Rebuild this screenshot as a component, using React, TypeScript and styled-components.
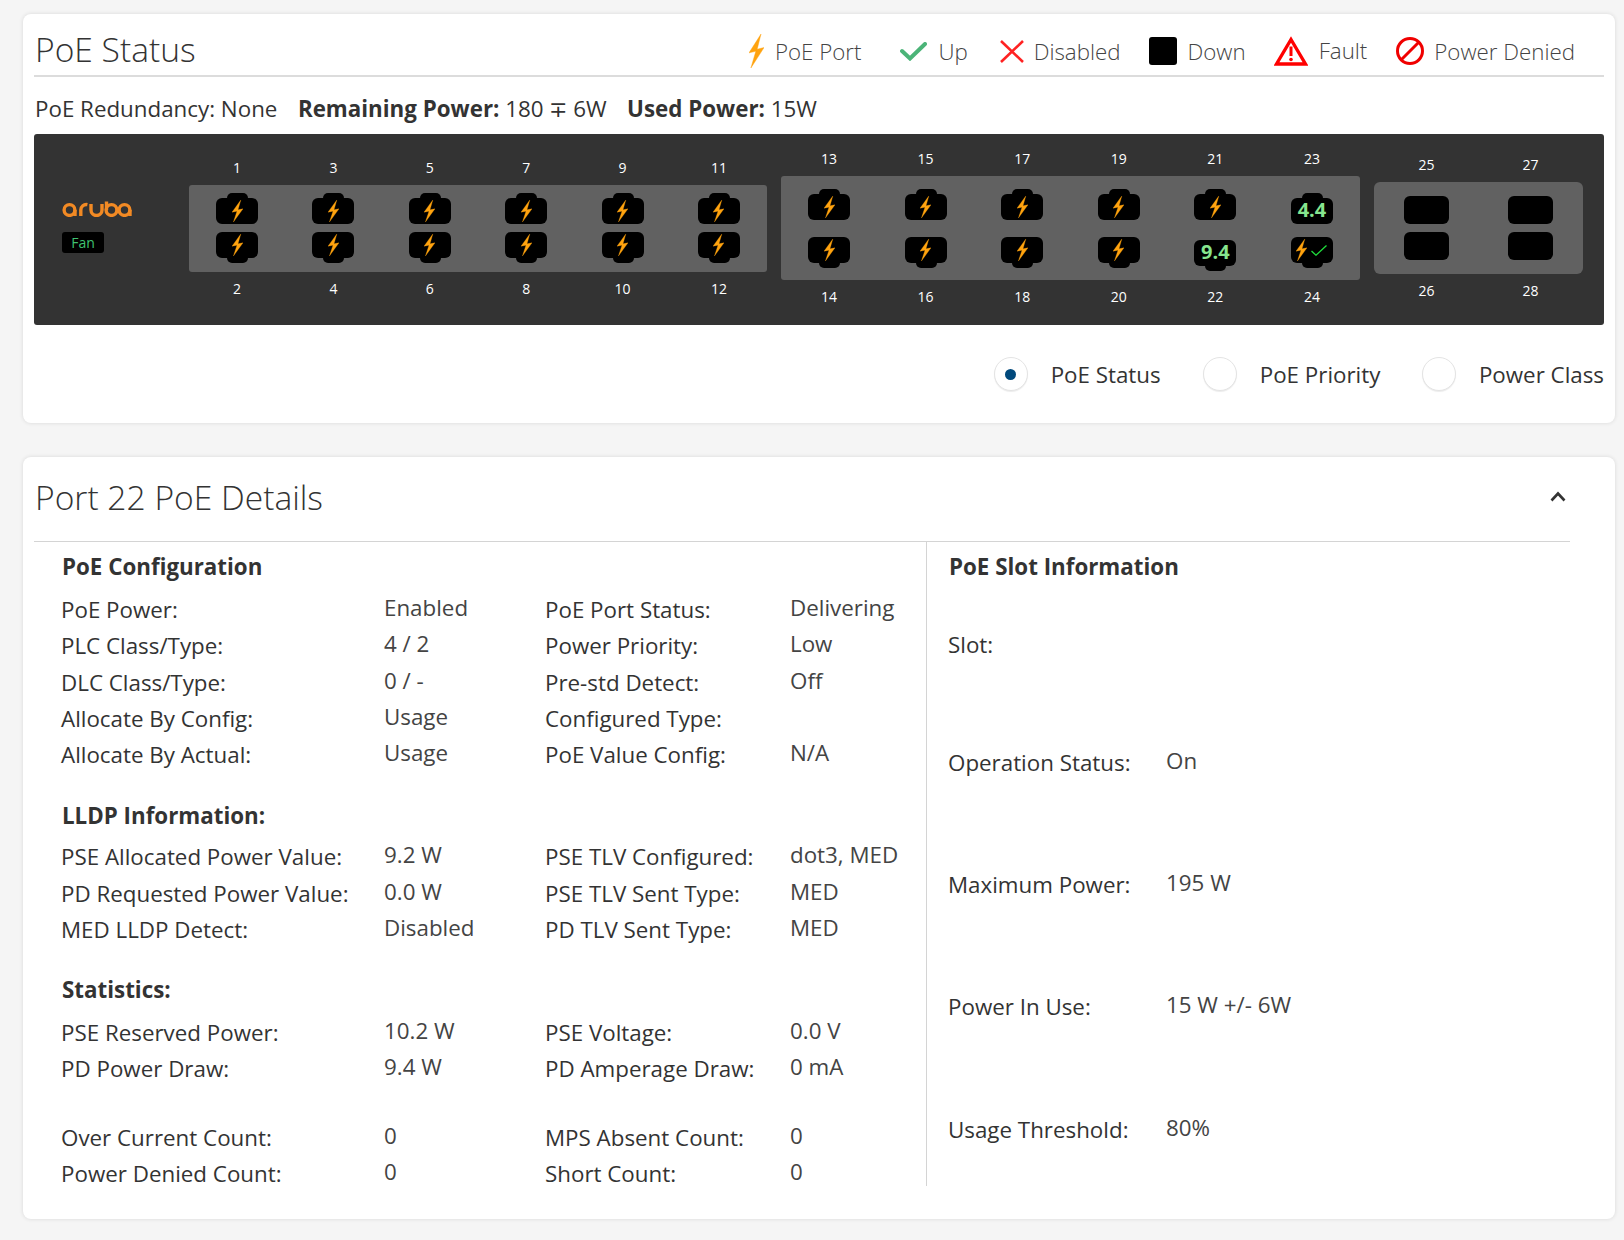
import React from "react";
import styled, { createGlobalStyle } from "styled-components";

const Global = createGlobalStyle`
  html, body { margin: 0; padding: 0; background: #f5f5f5; }
  body { font-family: "Open Sans", "Liberation Sans", sans-serif; color: #333; }
  * { box-sizing: border-box; }
`;

const Page = styled.div`
  width: 1624px;
  padding: 14px 9px 21px 23px;
  display: flex;
  flex-direction: column;
  gap: 34px;
`;
const Card = styled.section`
  background: #fff;
  border-radius: 8px;
  box-shadow: 0 0 4px rgba(0, 0, 0, 0.12);
  padding: 0 11px 0 11px;
`;
const StatusCard = styled(Card)`
  height: 409px;
`;
const DetailCard = styled(Card)`
  height: 762px;
  padding-right: 45px;
`;
const Header = styled.header`
  height: 63px;
  border-bottom: 2px solid #dcdcdc;
  display: flex;
  align-items: flex-start;
  justify-content: space-between;
`;
const Title = styled.h1`
  margin: 0;
  padding: 14px 0 0 1px;
  font-size: 33.6px;
  line-height: 42px;
  font-weight: 300;
  color: #333;
`;
const Legend = styled.div`
  display: flex;
  align-items: center;
  height: 62px;
  padding: 12px 29px 0 0;
  font-size: 22.3px;
  font-weight: 300;
  color: #444;
`;
const LegendItem = styled.span<{ $gap: number; $mr: number; $up?: number }>`
  display: flex;
  align-items: center;
  gap: ${(p) => p.$gap}px;
  margin-right: ${(p) => p.$mr}px;
  & > span { position: relative; top: ${(p) => -(p.$up ?? 0)}px; }
  & > svg { flex: none; }
`;
const InfoLine = styled.p`
  margin: 17px 0 10px;
  padding-left: 1px;
  font-size: 22.35px;
  line-height: 30px;
  display: flex;
  gap: 20.5px;
  color: #333;
`;
const Strong = styled.b`
  font-weight: 700;
`;
const Switch = styled.div`
  height: 191px;
  background: #333;
  border-radius: 3px;
  display: flex;
  align-items: center;
  gap: 14px;
  padding: 0 20px 3px 0;
  color: #fff;
`;
const Brand = styled.div`
  width: 141px;
  padding: 0 0 3px 28px;
  display: flex;
  flex-direction: column;
  gap: 15px;
`;
const Fan = styled.div`
  width: 42px;
  height: 21px;
  background: #000;
  border-radius: 3px;
  color: #3fc271;
  font-size: 14px;
  line-height: 21px;
  text-align: center;
`;
const Module = styled.div<{ $w: number }>`
  width: ${(p) => p.$w}px;
  display: flex;
  flex-direction: column;
  gap: 7px;
`;
const NumRow = styled.div<{ $cols: number; $cell: number; $pad: number }>`
  display: grid;
  grid-template-columns: repeat(${(p) => p.$cols}, ${(p) => p.$cell}px);
  justify-content: space-between;
  padding: 0 ${(p) => p.$pad}px;
  font-size: 14px;
  line-height: 20px;
  text-align: center;
  color: #fff;
`;
const Tray = styled.div<{ $cols: number; $cell: number; $pad: number; $rows: string; $py: string; $gap: number; $radius: number }>`
  display: grid;
  grid-template-columns: repeat(${(p) => p.$cols}, ${(p) => p.$cell}px);
  grid-template-rows: ${(p) => p.$rows};
  grid-auto-flow: column;
  justify-content: space-between;
  row-gap: ${(p) => p.$gap}px;
  padding: ${(p) => p.$py};
  padding-left: ${(p) => p.$pad}px;
  padding-right: ${(p) => p.$pad}px;
  background: #616161;
  border-radius: ${(p) => p.$radius}px;
`;
const Port = styled.div<{ $flip?: boolean; $end?: boolean }>`
  width: 42px;
  height: 31px;
  position: relative;
  display: flex;
  align-items: center;
  justify-content: center;
  align-self: ${(p) => (p.$end ? "end" : "start")};
  padding: ${(p) => (p.$flip ? "0 0 5px" : "5px 0 0")};
  &::before {
    content: "";
    position: absolute;
    left: 0;
    right: 0;
    height: 26px;
    background: #000;
    border-radius: 6px;
    ${(p) => (p.$flip ? "top: 0;" : "bottom: 0;")}
  }
  &::after {
    content: "";
    position: absolute;
    left: 11px;
    width: 21px;
    height: 12px;
    background: #000;
    border-radius: 5px;
    ${(p) => (p.$flip ? "bottom: 0;" : "top: 0;")}
  }
  & > * { position: relative; z-index: 1; }
`;
const Watts = styled.span`
  font-size: 20px;
  line-height: 22px;
  font-weight: 700;
  color: #86e58e;
  margin-top: -2px;
`;
const Combo = styled.div`
  display: flex;
  align-items: center;
  gap: 4px;
`;
const SfpPort = styled.div`
  width: 45px;
  height: 28px;
  background: #000;
  border-radius: 6px;
`;
const Radios = styled.div`
  margin-top: 32px;
  display: flex;
  justify-content: flex-end;
  align-items: center;
  font-size: 22.35px;
  color: #333;
`;
const RadioItem = styled.label<{ $mr: number }>`
  display: flex;
  align-items: center;
  gap: 23px;
  margin-right: ${(p) => p.$mr}px;
`;
const RadioDot = styled.span<{ $on?: boolean }>`
  width: 34px;
  height: 34px;
  border-radius: 50%;
  background: #fff;
  border: 1px solid #e4e4e4;
  box-shadow: 0 1px 1px rgba(0, 0, 0, 0.08);
  display: flex;
  align-items: center;
  justify-content: center;
  &::after {
    content: "";
    display: ${(p) => (p.$on ? "block" : "none")};
    width: 11px;
    height: 11px;
    border-radius: 50%;
    background: #01497c;
  }
`;
const DetailHeader = styled.header`
  height: 85px;
  border-bottom: 1px solid #d4d4d4;
  display: flex;
  align-items: flex-start;
  justify-content: space-between;
`;
const DetailTitle = styled(Title)`
  padding-top: 19px;
`;
const Chevron = styled.svg`
  margin: 34px 4px 0 0;
`;
const Columns = styled.div`
  display: flex;
  height: 644px;
`;
const Left = styled.div`
  width: 893px;
  flex: none;
  border-right: 1px solid #d4d4d4;
  padding: 10px 0 0 27px;
`;
const Right = styled.div`
  flex: 1;
  padding: 10px 0 0 21px;
`;
const Section = styled.div<{ $mt: number }>`
  margin-top: ${(p) => p.$mt}px;
`;
const Heading = styled.h3<{ $mb: number }>`
  margin: 0 0 ${(p) => p.$mb}px 1px;
  font-size: 22.35px;
  line-height: 30px;
  font-weight: 700;
  color: #333;
`;
const Row = styled.div`
  display: grid;
  grid-template-columns: 323px 161px 245px 1fr;
  align-items: center;
  height: 36.25px;
  font-size: 22.35px;
  line-height: 30px;
  white-space: nowrap;
`;
const Label = styled.span`
  color: #333;
`;
const Value = styled.span`
  color: #444;
  padding-bottom: 4px;
`;
const SlotRow = styled.div<{ $h: number }>`
  display: grid;
  grid-template-columns: 218px 1fr;
  align-items: center;
  height: ${(p) => p.$h}px;
  font-size: 22.35px;
  line-height: 30px;
`;

const Bolt = ({ w = 11, h = 22 }: { w?: number; h?: number }) => (
  <svg width={w} height={h} viewBox="0 0 11 22" preserveAspectRatio="none">
    <path d="M8.8 0 L0 12.2 L5 11.2 L1.4 22 L11 8.8 L6 9.8 Z" fill="#ffa30f" stroke="#ffa30f" strokeWidth="0.3" />
  </svg>
);

const Logo = () => (
  <svg width="70" height="16" viewBox="0 0 70 16" fill="none" stroke="#f28a24" strokeWidth="3.4">
    <circle cx="7.5" cy="9" r="5.4" />
    <path d="M13 9 V15" />
    <path d="M18.8 15 V9 a5.5 5.5 0 0 1 6.6 -5.4" />
    <path d="M29 3 V9 a5.5 5.5 0 0 0 11 0 V3" />
    <circle cx="49.5" cy="9" r="5.4" />
    <path d="M44.5 0.5 V9" />
    <circle cx="62.5" cy="9" r="5.4" />
    <path d="M68 9 V15" />
  </svg>
);

type Content = { watts?: string; ok?: boolean; end?: boolean };

const Ports: React.FC<{ c?: Content; flip?: boolean }> = ({ c, flip }) => (
  <Port $flip={flip} $end={c?.end}>
    {c?.watts ? (
      <Watts>{c.watts}</Watts>
    ) : c?.ok ? (
      <Combo>
        <Bolt />
        <svg width="16" height="11" viewBox="0 0 16 11" fill="none">
          <path d="M0.5 6 L5 10.2 L15.5 0.5" stroke="#1fdc3c" strokeWidth="1.3" />
        </svg>
      </Combo>
    ) : (
      <Bolt />
    )}
  </Port>
);

const odds1 = ["1", "3", "5", "7", "9", "11"];
const evens1 = ["2", "4", "6", "8", "10", "12"];
const odds2 = ["13", "15", "17", "19", "21", "23"];
const evens2 = ["14", "16", "18", "20", "22", "24"];
const special: Record<string, Content> = {
  "23": { watts: "4.4", end: true },
  "22": { watts: "9.4", end: true },
  "24": { ok: true },
};

type R = [string, string, string, string];
const config: R[] = [
  ["PoE Power:", "Enabled", "PoE Port Status:", "Delivering"],
  ["PLC Class/Type:", "4 / 2", "Power Priority:", "Low"],
  ["DLC Class/Type:", "0 / -", "Pre-std Detect:", "Off"],
  ["Allocate By Config:", "Usage", "Configured Type:", ""],
  ["Allocate By Actual:", "Usage", "PoE Value Config:", "N/A"],
];
const lldp: R[] = [
  ["PSE Allocated Power Value:", "9.2 W", "PSE TLV Configured:", "dot3, MED"],
  ["PD Requested Power Value:", "0.0 W", "PSE TLV Sent Type:", "MED"],
  ["MED LLDP Detect:", "Disabled", "PD TLV Sent Type:", "MED"],
];
const stats: R[] = [
  ["PSE Reserved Power:", "10.2 W", "PSE Voltage:", "0.0 V"],
  ["PD Power Draw:", "9.4 W", "PD Amperage Draw:", "0 mA"],
];
const counts: R[] = [
  ["Over Current Count:", "0", "MPS Absent Count:", "0"],
  ["Power Denied Count:", "0", "Short Count:", "0"],
];
const slot: [string, string, number][] = [
  ["Slot:", "", 114],
  ["Operation Status:", "On", 121.5],
  ["Maximum Power:", "195 W", 122.5],
  ["Power In Use:", "15 W +/- 6W", 122.5],
  ["Usage Threshold:", "80%", 122.5],
];

const Rows: React.FC<{ data: R[] }> = ({ data }) => (
  <>
    {data.map((r) => (
      <Row key={r[0]}>
        <Label>{r[0]}</Label>
        <Value>{r[1]}</Value>
        <Label>{r[2]}</Label>
        <Value>{r[3]}</Value>
      </Row>
    ))}
  </>
);

export default function App() {
  return (
    <Page>
      <Global />
      <StatusCard>
        <Header>
          <Title>PoE Status</Title>
          <Legend>
            <LegendItem $gap={11} $mr={39}>
              <Bolt w={15} h={34} />
              <span>PoE Port</span>
            </LegendItem>
            <LegendItem $gap={11} $mr={32}>
              <svg width="27" height="19" viewBox="0 0 27 19" fill="none">
                <path d="M2 9 L10 16.5 L25 2" stroke="#4bb478" strokeWidth="4" strokeLinecap="round" />
              </svg>
              <span>Up</span>
            </LegendItem>
            <LegendItem $gap={10} $mr={28}>
              <svg width="24" height="23" viewBox="0 0 24 23" fill="none">
                <path d="M1 1 L23 22 M23 1 L1 22" stroke="#ff2222" strokeWidth="2.6" />
              </svg>
              <span>Disabled</span>
            </LegendItem>
            <LegendItem $gap={11} $mr={28}>
              <svg width="28" height="28" viewBox="0 0 28 28">
                <rect width="28" height="28" rx="3" fill="#000" />
              </svg>
              <span>Down</span>
            </LegendItem>
            <LegendItem $gap={11} $mr={29} $up={1}>
              <svg width="34" height="30" viewBox="0 0 34 30" fill="none">
                <path d="M17 3.5 L31.5 28 H2.5 Z" stroke="#ff0000" strokeWidth="3.4" strokeLinejoin="miter" />
                <path d="M17 10.5 V20" stroke="#ff0000" strokeWidth="3" />
                <circle cx="17" cy="23.5" r="1.8" fill="#ff0000" />
              </svg>
              <span>Fault</span>
            </LegendItem>
            <LegendItem $gap={10} $mr={0}>
              <svg width="28" height="28" viewBox="0 0 28 28" fill="none">
                <circle cx="14" cy="14" r="12.5" stroke="#f00000" strokeWidth="3" />
                <path d="M5 23 L23 5" stroke="#f00000" strokeWidth="3" />
              </svg>
              <span>Power Denied</span>
            </LegendItem>
          </Legend>
        </Header>
        <InfoLine>
          <span>PoE Redundancy: None</span>
          <span>
            <Strong>Remaining Power:</Strong> 180 ∓ 6W
          </span>
          <span>
            <Strong>Used Power:</Strong> 15W
          </span>
        </InfoLine>
        <Switch>
          <Brand>
            <Logo />
            <Fan>Fan</Fan>
          </Brand>
          <Module $w={578}>
            <NumRow $cols={6} $cell={42} $pad={27}>
              {odds1.map((n) => (
                <span key={n}>{n}</span>
              ))}
            </NumRow>
            <Tray $cols={6} $cell={42} $pad={27} $rows="31px 31px" $py="8px 0 9px" $gap={8} $radius={3}>
              {odds1.flatMap((n, i) => [<Ports key={n} />, <Ports key={evens1[i]} flip />])}
            </Tray>
            <NumRow $cols={6} $cell={42} $pad={27}>
              {evens1.map((n) => (
                <span key={n}>{n}</span>
              ))}
            </NumRow>
          </Module>
          <Module $w={579}>
            <NumRow $cols={6} $cell={42} $pad={27}>
              {odds2.map((n) => (
                <span key={n}>{n}</span>
              ))}
            </NumRow>
            <Tray $cols={6} $cell={42} $pad={27} $rows="35px 34px" $py="13px 0 9px" $gap={13} $radius={3}>
              {odds2.flatMap((n, i) => [
                <Ports key={n} c={special[n]} />,
                <Ports key={evens2[i]} c={special[evens2[i]]} flip />,
              ])}
            </Tray>
            <NumRow $cols={6} $cell={42} $pad={27}>
              {evens2.map((n) => (
                <span key={n}>{n}</span>
              ))}
            </NumRow>
          </Module>
          <Module $w={209}>
            <NumRow $cols={2} $cell={45} $pad={30}>
              <span>25</span>
              <span>27</span>
            </NumRow>
            <Tray $cols={2} $cell={45} $pad={30} $rows="28px 28px" $py="14px 0 14px" $gap={8} $radius={6}>
              <SfpPort />
              <SfpPort />
              <SfpPort />
              <SfpPort />
            </Tray>
            <NumRow $cols={2} $cell={45} $pad={30}>
              <span>26</span>
              <span>28</span>
            </NumRow>
          </Module>
        </Switch>
        <Radios>
          <RadioItem $mr={42}>
            <RadioDot $on />
            PoE Status
          </RadioItem>
          <RadioItem $mr={41.5}>
            <RadioDot />
            PoE Priority
          </RadioItem>
          <RadioItem $mr={0}>
            <RadioDot />
            Power Class
          </RadioItem>
        </Radios>
      </StatusCard>
      <DetailCard>
        <DetailHeader>
          <DetailTitle>Port 22 PoE Details</DetailTitle>
          <Chevron width="16" height="11" viewBox="0 0 16 11" fill="none">
            <path d="M1.5 9.5 L8 2.5 L14.5 9.5" stroke="#333" strokeWidth="2.6" />
          </Chevron>
        </DetailHeader>
        <Columns>
          <Left>
            <Section $mt={0}>
              <Heading $mb={10}>PoE Configuration</Heading>
              <Rows data={config} />
            </Section>
            <Section $mt={28}>
              <Heading $mb={8}>LLDP Information:</Heading>
              <Rows data={lldp} />
            </Section>
            <Section $mt={27}>
              <Heading $mb={10}>Statistics:</Heading>
              <Rows data={stats} />
            </Section>
            <Section $mt={32}>
              <Rows data={counts} />
            </Section>
          </Left>
          <Right>
            <Heading $mb={6}>PoE Slot Information</Heading>
            {slot.map(([l, v, h]) => (
              <SlotRow key={l} $h={h}>
                <Label>{l}</Label>
                <Value>{v}</Value>
              </SlotRow>
            ))}
          </Right>
        </Columns>
      </DetailCard>
    </Page>
  );
}
